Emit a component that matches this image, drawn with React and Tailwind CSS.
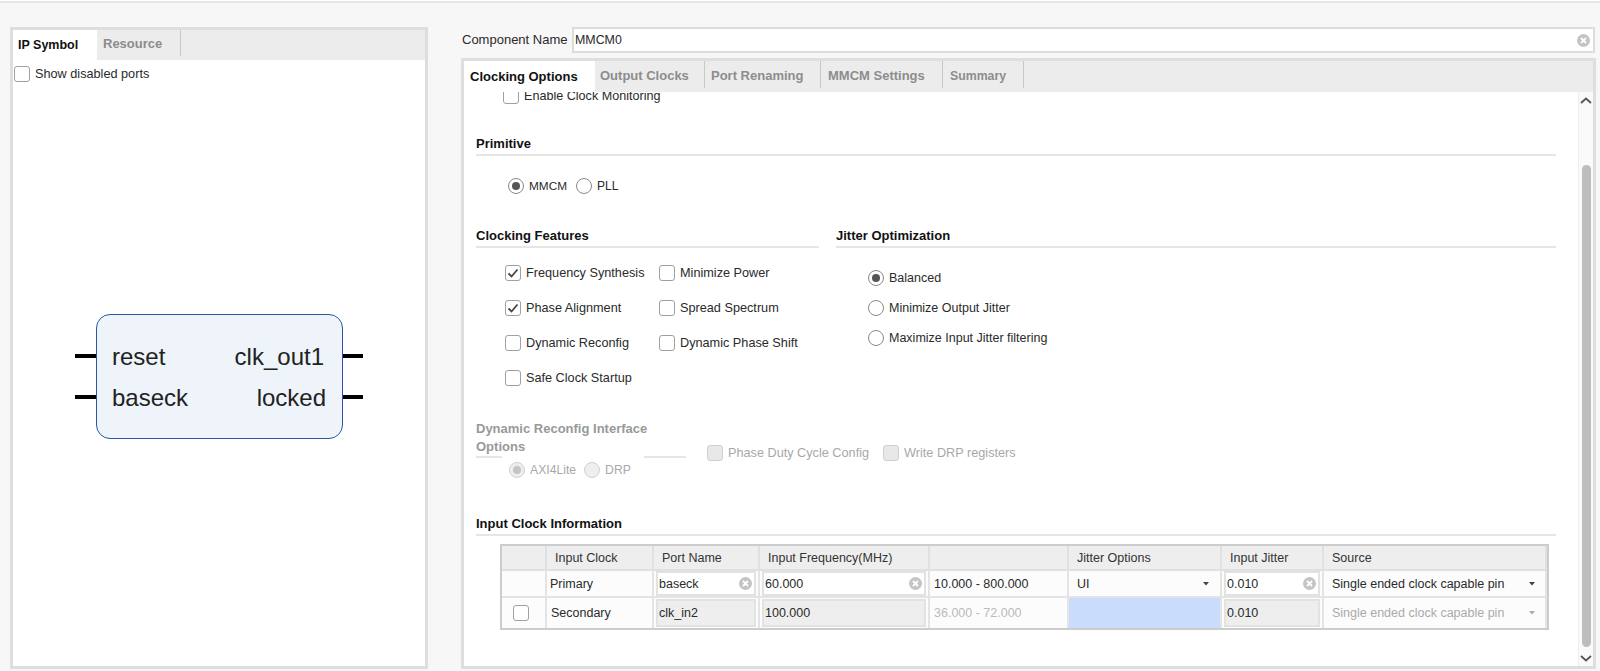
import React from "react";

const Check = ({ on, off }) => (
  <span className={`w-[16px] h-[16px] shrink-0 rounded-[3px] border flex items-center justify-center ${off ? "bg-[#e8e8e8] border-[#d0d0d0]" : "bg-white border-[#a0a0a0]"}`}>
    {on && (
      <svg width="12" height="12" viewBox="0 0 12 12" fill="none">
        <path d="M1.5 6.5 L4.5 9.5 L10.5 2.5" stroke="#444" strokeWidth="1.8" />
      </svg>
    )}
  </span>
);

const Radio = ({ on, off }) => (
  <span className={`w-[16px] h-[16px] shrink-0 rounded-full border flex items-center justify-center ${off ? "border-[#d0d0d0] bg-[#eee]" : "border-[#8a8a8a] bg-white"}`}>
    {on && <span className={`w-[8px] h-[8px] rounded-full ${off ? "bg-[#c4c4c4]" : "bg-[#555]"}`} />}
  </span>
);

const Opt = ({ kind = "check", on, off, className = "", children }) => (
  <label className={`flex items-center gap-[5px] h-[16px] whitespace-nowrap ${className} ${off ? "text-[#a8a8a8]" : "text-[#2a2a2a]"}`}>
    {kind === "check" ? <Check on={on} off={off} /> : <Radio on={on} off={off} />}
    <span>{children}</span>
  </label>
);

const Clear = () => (
  <svg width="13" height="13" viewBox="0 0 13 13" className="shrink-0">
    <circle cx="6.5" cy="6.5" r="6.5" fill="#c4c4c4" />
    <path d="M4 4 L9 9 M9 4 L4 9" stroke="#fff" strokeWidth="1.8" />
  </svg>
);

const Caret = ({ off }) => (
  <svg width="6" height="4" viewBox="0 0 6 4" className="shrink-0">
    <path d="M0 0 H6 L3 3.5 Z" fill={off ? "#aaa" : "#444"} />
  </svg>
);

const Heading = ({ children, className = "" }) => (
  <div className={`h-[20px] border-b-2 border-[#e6e6e6] font-bold text-[13px] leading-[16px] text-[#111] ${className}`}>{children}</div>
);

const Input = ({ value, off }) => (
  <div className={`mx-[2px] flex items-center justify-between pl-[1px] pr-[2px] border-2 border-[#e2e2e2] ${off ? "bg-[#eeeeee] h-[28px]" : "bg-white h-[25px]"}`}>
    <span>{value}</span>
    {!off && <Clear />}
  </div>
);

const Th = ({ children }) => (
  <th className="h-[24px] p-0 pl-[8px] text-left font-normal bg-[#eeeeee] border-r-2 border-b-2 border-[#e0e0e0] text-[#333]">{children}</th>
);

const Td = ({ children, className = "" }) => (
  <td className={`p-0 border-r-2 border-[#e4e4e4] ${className}`}>{children}</td>
);

export default function App() {
  return (
    <div className="w-[1600px] h-[671px] overflow-hidden bg-[#f7f7f7] text-[12.7px] leading-[16px] text-[#2a2a2a] font-['Liberation_Sans',Arial,sans-serif]">
      <div className="h-[3px] bg-[#e6e6e6] border-t border-white" />
      <div className="flex pt-[24px] pl-[10px]">
        {/* left panel */}
        <div className="w-[418px] h-[642px] border-[3px] border-[#dedede] bg-white">
          <div className="h-[30px] bg-[#ececec] flex items-start font-bold">
            <div className="w-[84px] h-[30px] pl-[5px] flex items-center bg-white text-[#111] text-[12.5px]">IP Symbol</div>
            <div className="w-[84px] h-[26px] pl-[6px] pt-[2px] flex items-center text-[13px] text-[#8c8c8c] border-r border-[#c8c8c8]">Resource</div>
          </div>
          <div className="pl-[1px] pt-[6px]">
            <Opt>Show disabled ports</Opt>
          </div>
          <div className="mt-[232px] flex justify-center">
            <div className="w-[21px] pt-[40px] flex flex-col gap-[37px]">
              <div className="h-[4px] bg-black" />
              <div className="h-[4px] bg-black" />
            </div>
            <div className="w-[247px] h-[125px] rounded-[14px] border border-[#2a55a5] bg-[#eff4fb] pt-[21px] pl-[15px] pr-[16px] text-[24px] leading-[41px] text-[#222]">
              <div className="flex justify-between">
                <span>reset</span>
                <span className="mr-[2px]">clk_out1</span>
              </div>
              <div className="flex justify-between">
                <span>baseck</span>
                <span>locked</span>
              </div>
            </div>
            <div className="w-[20px] pt-[40px] flex flex-col gap-[37px]">
              <div className="h-[4px] bg-black" />
              <div className="h-[4px] bg-black" />
            </div>
          </div>
        </div>

        {/* right side */}
        <div className="ml-[33px] w-[1135px]">
          <div className="flex items-center h-[26px]">
            <span className="w-[111px] pl-[1px] whitespace-nowrap text-[13px]">Component Name</span>
            <div className="w-[1023px] h-[26px] flex items-center justify-between border-2 border-[#dcdcdc] bg-white pl-[1px] pr-[3px]">
              <span className="text-[12.4px]">MMCM0</span>
              <Clear />
            </div>
          </div>

          <div className="mt-[5px] h-[611px] border-[3px] border-[#dedede] bg-white flex flex-col">
            <div className="h-[31px] shrink-0 bg-[#ececec] flex items-start font-bold text-[13px] text-[#8c8c8c]">
              <div className="w-[131px] h-[31px] pl-[6px] flex items-center text-[#111] bg-white">Clocking Options</div>
              <div className="w-[110px] h-[27px] pl-[5px] pt-[2px] flex items-center border-r border-[#c8c8c8]">Output Clocks</div>
              <div className="w-[116px] h-[27px] pl-[6px] pt-[2px] flex items-center border-r border-[#c8c8c8]">Port Renaming</div>
              <div className="w-[122px] h-[27px] pl-[7px] pt-[2px] flex items-center border-r border-[#c8c8c8]">MMCM Settings</div>
              <div className="w-[81px] h-[27px] pl-[7px] pt-[2px] flex items-center border-r border-[#c8c8c8] text-[12.3px]">Summary</div>
            </div>

            <div className="flex flex-1 min-h-0">
              <div className="w-[1114px] overflow-hidden pl-[12px]">
                <div className="w-[1080px]">
                  <div className="-mt-[4px] pl-[27px]">
                    <Opt className="text-[12.6px]">Enable Clock Monitoring</Opt>
                  </div>

                  <Heading className="mt-[32px]">Primitive</Heading>
                  <div className="mt-[22px] pl-[32px] flex gap-[9px]">
                    <Opt kind="radio" on className="text-[11.8px]">MMCM</Opt>
                    <Opt kind="radio" className="text-[12px]">PLL</Opt>
                  </div>

                  <div className="mt-[34px] flex gap-[17px]">
                    <div className="w-[343px] shrink-0">
                      <Heading>Clocking Features</Heading>
                      <div className="mt-[17px] pl-[29px] grid grid-cols-[154px_1fr] gap-y-[19px]">
                        <Opt on>Frequency Synthesis</Opt>
                        <Opt>Minimize Power</Opt>
                        <Opt on>Phase Alignment</Opt>
                        <Opt>Spread Spectrum</Opt>
                        <Opt>Dynamic Reconfig</Opt>
                        <Opt>Dynamic Phase Shift</Opt>
                        <Opt>Safe Clock Startup</Opt>
                      </div>
                    </div>
                    <div className="flex-1">
                      <Heading>Jitter Optimization</Heading>
                      <div className="mt-[22px] pl-[32px] flex flex-col gap-[14px] text-[12.5px]">
                        <Opt kind="radio" on>Balanced</Opt>
                        <Opt kind="radio">Minimize Output Jitter</Opt>
                        <Opt kind="radio">Maximize Input Jitter filtering</Opt>
                      </div>
                    </div>
                  </div>

                  <div className="mt-[34px] flex">
                    <div className="w-[210px] shrink-0">
                      <div className="h-[36px] w-[180px] font-bold text-[13px] leading-[18px] text-[#999]">Dynamic Reconfig Interface Options</div>
                      <div className="flex justify-between">
                        <div className="w-[26px] h-[2px] bg-[#e6e6e6]" />
                        <div className="w-[42px] h-[2px] bg-[#e6e6e6]" />
                      </div>
                      <div className="mt-[4px] pl-[33px] flex gap-[8px]">
                        <Opt kind="radio" on off className="text-[12.2px]">AXI4Lite</Opt>
                        <Opt kind="radio" off className="text-[12.2px]">DRP</Opt>
                      </div>
                    </div>
                    <div className="ml-[21px] mt-[25px] flex gap-[14px]">
                      <Opt off>Phase Duty Cycle Config</Opt>
                      <Opt off>Write DRP registers</Opt>
                    </div>
                  </div>

                  <Heading className="mt-[38px]">Input Clock Information</Heading>

                  <div className="mt-[8px] ml-[24px] w-[1049px] border-2 border-[#cccccc] text-[12.5px]">
                    <table className="w-full table-fixed border-collapse">
                      <colgroup>
                        <col className="w-[44px]" />
                        <col className="w-[107px]" />
                        <col className="w-[106px]" />
                        <col className="w-[170px]" />
                        <col className="w-[139px]" />
                        <col className="w-[153px]" />
                        <col className="w-[102px]" />
                        <col />
                      </colgroup>
                      <thead>
                        <tr>
                          <Th />
                          <Th>Input Clock</Th>
                          <Th>Port Name</Th>
                          <Th>Input Frequency(MHz)</Th>
                          <Th />
                          <Th>Jitter Options</Th>
                          <Th>Input Jitter</Th>
                          <Th>Source</Th>
                        </tr>
                      </thead>
                      <tbody>
                        <tr className="h-[27px] border-b-2 border-[#e4e4e4] bg-[#fcfcfc]">
                          <Td />
                          <Td className="pl-[3px]">Primary</Td>
                          <Td><Input value="baseck" /></Td>
                          <Td><Input value="60.000" /></Td>
                          <Td className="pl-[4px]">10.000 - 800.000</Td>
                          <Td className="pl-[8px] pr-[11px]">
                            <div className="flex items-center justify-between"><span>UI</span><Caret /></div>
                          </Td>
                          <Td><Input value="0.010" /></Td>
                          <Td className="pl-[8px] pr-[10px] border-r-0">
                            <div className="flex items-center justify-between"><span>Single ended clock capable pin</span><Caret /></div>
                          </Td>
                        </tr>
                        <tr className="h-[31px] bg-[#fcfcfc]">
                          <Td className="pl-[11px]"><Check /></Td>
                          <Td className="pl-[4px]">Secondary</Td>
                          <Td><Input value="clk_in2" off /></Td>
                          <Td><Input value="100.000" off /></Td>
                          <Td className="pl-[4px] text-[#bbbbbb]">36.000 - 72.000</Td>
                          <Td className="bg-[#c9dcfb]" />
                          <Td><Input value="0.010" off /></Td>
                          <Td className="pl-[8px] pr-[10px] border-r-0 text-[#aaaaaa]">
                            <div className="flex items-center justify-between"><span>Single ended clock capable pin</span><Caret off /></div>
                          </Td>
                        </tr>
                      </tbody>
                    </table>
                  </div>
                </div>
              </div>

              {/* scrollbar */}
              <div className="w-[15px] shrink-0 bg-[#fafafa] border-l border-[#eeeeee] flex flex-col items-center">
                <svg width="12" height="7" viewBox="0 0 12 7" className="mt-[5px]" fill="none">
                  <path d="M1 6 L6 1.5 L11 6" stroke="#555" strokeWidth="1.8" />
                </svg>
                <div className="mt-[61px] w-[9px] h-[482px] rounded-full bg-[#bdbdbd]" />
                <svg width="12" height="7" viewBox="0 0 12 7" className="mt-[8px]" fill="none">
                  <path d="M1 1 L6 5.5 L11 1" stroke="#555" strokeWidth="1.8" />
                </svg>
              </div>
            </div>
          </div>
        </div>
      </div>
    </div>
  );
}
